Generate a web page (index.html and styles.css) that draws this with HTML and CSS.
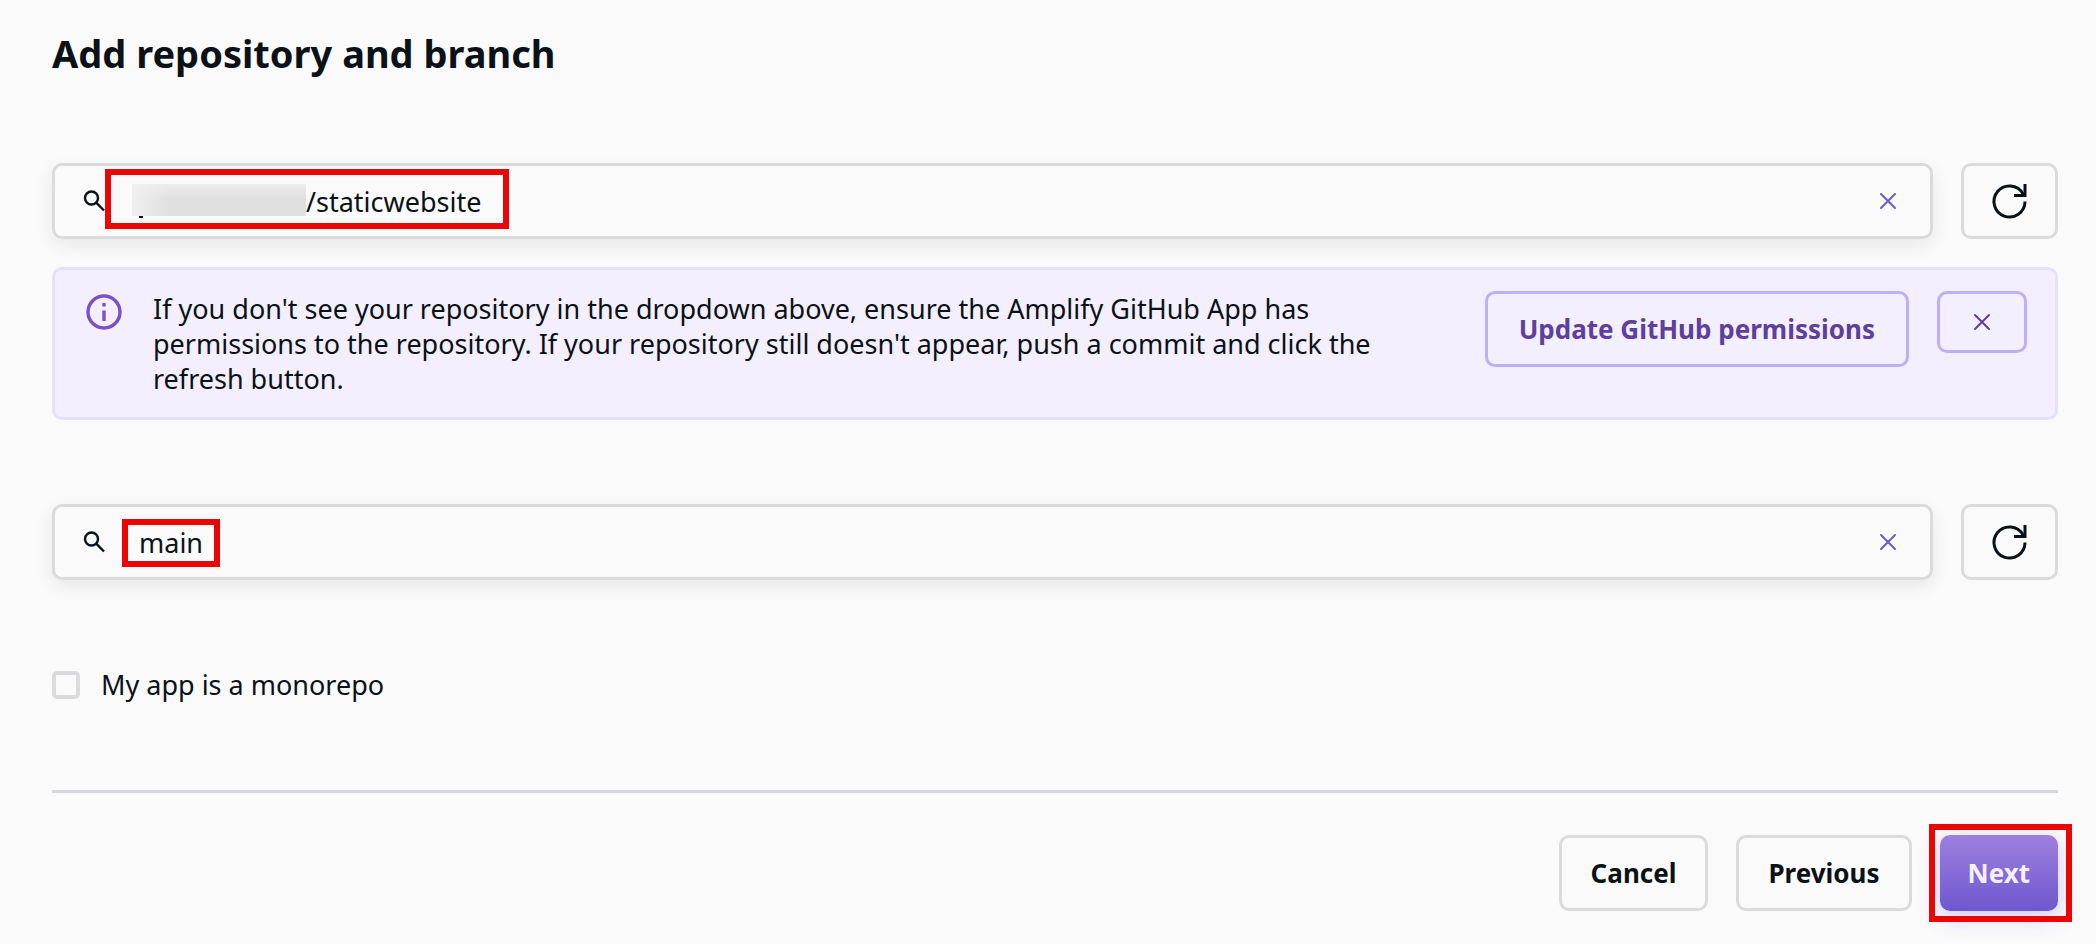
FILE: index.html
```html
<!DOCTYPE html>
<html lang="en">
<head>
<meta charset="utf-8">
<title>Add repository and branch</title>
<link rel="stylesheet" href="styles.css">
</head>
<body>
<svg class="sprite" aria-hidden="true">
  <symbol id="search" viewBox="0 0 24 24"><circle cx="8.5" cy="9" r="6.500"/><path d="M13.200 13.700 21 21.500"/></symbol>
  <symbol id="close" viewBox="0 0 18 18"><path d="M2 2l14 14M16 2l-14 14"/></symbol>
  <symbol id="refresh" viewBox="0 0 42 42"><path d="M36 21.500A15.500 15.500 0 1 1 33.900 13.700L35.500 15.500"/><path d="M36 4V15.500H25"/></symbol>
  <symbol id="info" viewBox="0 0 42 42"><circle cx="21" cy="21" r="16"/><path d="M21 19.500V30M21 12V15.500"/></symbol>
</svg>
<main class="page">
  <h1 class="title">Add repository and branch</h1>
  <form class="form">
    <div class="row">
      <div class="field">
        <svg class="icon-search"><use href="#search"/></svg>
        <div class="value">
          <input class="input input-repo" type="text" aria-label="Repository" value="/staticwebsite">
          <span class="redaction"></span>
          <span class="mark mark-repo"></span>
        </div>
        <button class="clear" type="button" aria-label="Clear repository"><svg class="icon-close"><use href="#close"/></svg></button>
      </div>
      <button class="btn btn-refresh" type="button" aria-label="Refresh repositories"><svg class="icon-refresh"><use href="#refresh"/></svg></button>
    </div>
    <div class="alert" role="status">
      <svg class="icon-info"><use href="#info"/></svg>
      <p class="alert-text">If you don't see your repository in the dropdown above, ensure the Amplify GitHub App has permissions to the repository. If your repository still doesn't appear, push a commit and click the refresh button.</p>
      <button class="btn btn-brand" type="button">Update GitHub permissions</button>
      <button class="btn btn-brand btn-dismiss" type="button" aria-label="Dismiss"><svg class="icon-close"><use href="#close"/></svg></button>
    </div>
    <div class="row row-branch">
      <div class="field">
        <svg class="icon-search"><use href="#search"/></svg>
        <div class="value">
          <input class="input" type="text" aria-label="Branch" value="main">
          <span class="mark mark-branch"></span>
        </div>
        <button class="clear" type="button" aria-label="Clear branch"><svg class="icon-close"><use href="#close"/></svg></button>
      </div>
      <button class="btn btn-refresh" type="button" aria-label="Refresh branches"><svg class="icon-refresh"><use href="#refresh"/></svg></button>
    </div>
    <label class="check"><input class="box" type="checkbox">My app is a monorepo</label>
    <hr class="rule">
    <div class="actions">
      <button class="btn" type="button">Cancel</button>
      <button class="btn" type="button">Previous</button>
      <span class="next-wrap">
        <button class="btn btn-primary" type="button">Next</button>
        <span class="mark mark-next"></span>
      </span>
    </div>
  </form>
</main>
</body>
</html>
```
FILE: styles.css
```css
* { box-sizing: border-box; }
body {
  margin: 0;
  background: #fafafa;
  color: #0a1218;
  font: 400 27px/35px "Noto Sans", sans-serif;
}
button, input { font: inherit; color: inherit; }
.sprite { position: absolute; width: 0; height: 0; }
svg { flex: none; display: block; fill: none; stroke: currentColor; }
.page { padding: 28px 38px 32px 52px; }
.title { margin: 0; font-size: 38px; line-height: 50px; font-weight: 700; }
.form { margin-top: 85px; }
.row { display: flex; gap: 28px; }
.field {
  flex: 1;
  display: flex;
  align-items: center;
  height: 76px;
  padding: 0 33px 0 28px;
  border: 3px solid #dadbdc;
  border-radius: 10px;
  box-shadow: 0 6px 18px rgba(0, 0, 0, .08);
}
.value { position: relative; flex: 1; display: flex; }
.input { width: 100%; height: 42px; padding: 0 0 0 32px; border: 0; background: none; outline: 0; }
.input-repo { padding-left: 199px; }
.icon-search { width: 24px; height: 24px; stroke-width: 2.4; }
.icon-close { width: 18px; height: 18px; stroke-width: 2; stroke-linecap: round; }
.icon-refresh { width: 42px; height: 42px; stroke-width: 3; }
.icon-info { width: 42px; height: 42px; stroke-width: 3.4; color: #7a50c8; }
.clear { padding: 0; border: 0; background: none; color: #6f58cf; }
.btn {
  display: flex;
  align-items: center;
  justify-content: center;
  height: 76px;
  padding: 0 29px;
  border: 3px solid #dadbdc;
  border-radius: 10px;
  background: none;
  font-size: 26px;
  font-weight: 700;
  white-space: nowrap;
}
.btn-refresh { width: 97px; padding: 0; }
.alert {
  display: flex;
  align-items: flex-start;
  gap: 28px;
  margin-top: 28px;
  padding: 21px 28px;
  border: 3px solid #e6e0ff;
  border-radius: 10px;
  background: #f4efff;
}
.alert-text { flex: 1; margin: 0; }
.btn-brand { padding: 0 31px; border-color: #bdb0f6; color: #5c3f9e; }
.btn-dismiss { width: 90px; height: 62px; }
.row-branch { margin-top: 84px; }
.check { display: flex; align-items: center; gap: 21px; width: fit-content; margin-top: 87px; }
.box { appearance: none; width: 28px; height: 28px; margin: 0; border: 4px solid #dadbdc; border-radius: 5px; }
.rule { margin: 88px 0 0; border: 0; height: 3px; background: #d6d6dc; }
.actions { display: flex; justify-content: flex-end; gap: 28px; margin-top: 42px; }
.next-wrap { position: relative; }
.btn-primary {
  border: 0;
  padding: 0 28px;
  color: #f4efff;
  background: linear-gradient(#9d80df, #6f58cf);
  box-shadow: 0 6px 22px rgba(120, 90, 240, .3);
}
.mark { position: absolute; border: 6px solid #eb0606; pointer-events: none; }
.mark-repo { left: -2px; top: -11px; width: 404px; height: 60px; }
.mark-branch { left: 15px; top: -2px; width: 98px; height: 48px; }
.mark-next { inset: -11px -14px -11px -11px; }
.redaction {
  position: absolute;
  left: 25px;
  top: 4px;
  width: 174px;
  height: 32px;
  background: linear-gradient(to right, #f0f0f0, rgba(240, 240, 240, 0) 20%), linear-gradient(#ececec, #e0e0e0 50%);
}
.redaction::after {
  content: "";
  position: absolute;
  left: 7px;
  top: 32px;
  width: 4px;
  height: 2px;
  background: #0a1218;
}
```
